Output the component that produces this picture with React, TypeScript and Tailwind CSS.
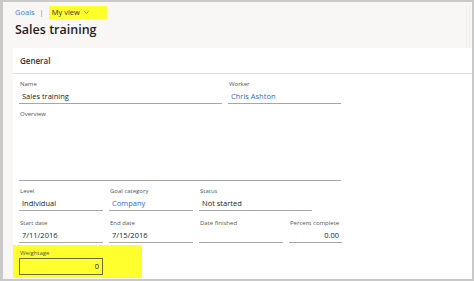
import { ChevronDown } from 'lucide-react';

const font = { fontFamily: '"Segoe UI", "Open Sans", sans-serif' };

function Field({
  label,
  value,
  width,
  blue,
  right,
}: {
  label: string;
  value?: string;
  width: string;
  blue?: boolean;
  right?: boolean;
}) {
  return (
    <div className={`flex flex-col ${width}`}>
      <div className="h-[10px] text-[6px] leading-[10px] text-[#555] pl-[1px]">{label}</div>
      <div
        className={`h-[15px] border-b border-[#a6a6a6] text-[7.5px] leading-[14px] px-[3px] ${
          right ? 'text-right' : ''
        } ${blue ? 'text-[#2f6bd0]' : 'text-[#222]'}`}
      >
        {value}
      </div>
    </div>
  );
}

export default function App() {
  return (
    <div
      style={font}
      className="w-[474px] h-[281px] overflow-hidden bg-[#f8f7f6] border-t-2 border-l-[3px] border-r-2 border-b-2 border-[#c9c9c9] flex flex-col"
    >
      {/* breadcrumb + title */}
      <div className="pl-[12px] pt-[4px] h-[46px] shrink-0 flex">
        <div className="flex-1">
          <div className="flex items-center h-[13px] text-[7.5px]">
            <span className="text-[#4a78c8]">Goals</span>
            <span className="text-[#888] mx-[5px]">|</span>
            <span className="flex items-center gap-[3px] bg-[#ffff2e] h-[13px] pl-[3px] pr-[17px] text-[#333]">
              My view
              <ChevronDown className="w-[7px] h-[7px]" strokeWidth={2} />
            </span>
          </div>
          <h1 className="text-[12.5px] font-semibold text-[#1f1f1f] leading-[18px] mt-[2px]">Sales training</h1>
        </div>
        <div className="w-[4px] mr-[2px] border-x border-[#efeeec]" />
      </div>

      {/* card */}
      <div className="ml-[10px] flex-1 bg-white flex flex-col">
        <div className="h-[26px] shrink-0 border-b border-[#e1e1e1] pl-[7px] flex items-center text-[8px] font-semibold text-[#333]">
          General
        </div>

        <div className="pl-[6px] pt-[5px] flex flex-col">
          <div className="flex gap-[6px]">
            <Field label="Name" value="Sales training" width="w-[203px]" />
            <Field label="Worker" value="Chris Ashton" width="w-[113px]" blue />
          </div>

          <div className="flex flex-col w-[322px] mt-[5px]">
            <div className="h-[10px] text-[6px] leading-[10px] text-[#555] pl-[1px]">Overview</div>
            <div className="h-[62px] border-b border-[#a6a6a6]" />
          </div>

          <div className="flex gap-[6px] mt-[5px]">
            <Field label="Level" value="Individual" width="w-[84px]" />
            <Field label="Goal category" value="Company" width="w-[84px]" blue />
            <Field label="Status" value="Not started" width="w-[113px]" />
          </div>

          <div className="flex gap-[6px] mt-[7px]">
            <Field label="Start date" value="7/11/2016" width="w-[84px]" />
            <Field label="End date" value="7/15/2016" width="w-[84px]" />
            <Field label="Date finished" width="w-[84px]" />
            <Field label="Percent complete" value="0.00" width="w-[53px]" right />
          </div>
        </div>

        <div className="mt-[2px] w-[129px] h-[33px] bg-[#ffff2e] pl-[6px] pt-[3px]">
          <div className="h-[10px] text-[6px] leading-[10px] text-[#555] pl-[1px]">Weightage</div>
          <div className="w-[84px] h-[17px] border border-[#6b6b3a] text-[7.5px] leading-[15px] text-right pr-[3px] text-[#222]">
            0
          </div>
        </div>
      </div>
    </div>
  );
}
